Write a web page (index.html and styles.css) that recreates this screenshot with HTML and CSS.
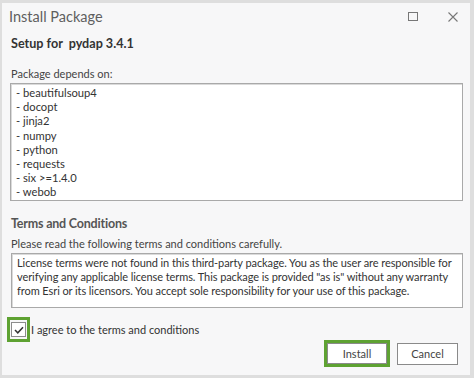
FILE: index.html
```html
<!DOCTYPE html>
<html lang="en">
<head>
    <meta charset="UTF-8">
    <title>Install Package</title>
    <link rel="stylesheet" href="styles.css">
</head>
<body>
    <div class="dialog">
        <div class="titlebar">
            <span class="title">Install Package</span>
            <div class="window-btns">
                <span class="win-btn">
                    <svg width="10" height="9" viewBox="0 0 10 9"><rect x="0.5" y="0.5" width="9" height="8" fill="none" stroke="#777" stroke-width="1"/></svg>
                </span>
                <span class="win-btn">
                    <svg width="10" height="10" viewBox="0 0 10 10"><path d="M0.5 0.5 L9.5 9.5 M9.5 0.5 L0.5 9.5" stroke="#777" stroke-width="1.1" fill="none"/></svg>
                </span>
            </div>
        </div>

        <div class="content">
            <h1 class="setup">Setup for&nbsp; pydap 3.4.1</h1>

            <div class="label">Package depends on:</div>
            <div class="box deps">
                <div>- beautifulsoup4</div>
                <div>- docopt</div>
                <div>- jinja2</div>
                <div>- numpy</div>
                <div>- python</div>
                <div>- requests</div>
                <div>- six &gt;=1.4.0</div>
                <div>- webob</div>
            </div>

            <h2 class="section">Terms and Conditions</h2>
            <div class="label">Please read the following terms and conditions carefully.</div>
            <div class="box terms">License terms were not found in this third-party package. You as the user are responsible for<br>verifying any applicable license terms. This package is provided "as is" without any warranty<br>from Esri or its licensors. You accept sole responsibility for your use of this package.</div>

            <label class="agree">
                <span class="highlight check-hl">
                    <span class="checkbox">
                        <svg width="10" height="8" viewBox="0 0 10 8"><path d="M1 4 L3.8 6.8 L9 1.2" stroke="#333" stroke-width="1.5" fill="none"/></svg>
                    </span>
                </span>
                <span>I agree to the terms and conditions</span>
            </label>

            <div class="actions">
                <span class="highlight btn-hl"><button class="btn">Install</button></span>
                <button class="btn">Cancel</button>
            </div>
        </div>
    </div>
</body>
</html>
```

FILE: styles.css
```css
body {
    margin: 0;
    background: #dedede;
    font-family: 'Lato', 'Segoe UI', sans-serif;
    color: #333;
}

.dialog {
    background: #f7f7f8;
    margin: 3px 4px 0 2px;
    height: 372px;
    box-sizing: border-box;
}

.titlebar {
    display: flex;
    justify-content: space-between;
    align-items: center;
    height: 27px;
    padding: 0 12px 0 7px;
}

.title {
    font-size: 14.5px;
    line-height: 20px;
    color: #5f5f5f;
}

.window-btns {
    display: flex;
    gap: 30px;
    align-items: center;
}

.win-btn {
    display: flex;
}

.content {
    padding: 0 7px 0 8px;
}

.setup {
    font-size: 12.6px;
    line-height: 18px;
    font-weight: 700;
    color: #333;
    margin: 5px 0 0 1px;
}

.label {
    font-size: 11px;
    line-height: 15px;
    color: #444;
    margin: 12.5px 0 2.5px 1px;
}

.section + .label {
    margin-top: 2.5px;
}

.box {
    background: #fff;
    border: 1px solid #a9a9a9;
    box-shadow: inset 1px 1px 0 #dadada;
    font-size: 11.2px;
    line-height: 14.2px;
    color: #333;
    box-sizing: border-box;
}

.deps {
    height: 118px;
    padding: 2px 5px;
}

.section {
    font-size: 12.5px;
    line-height: 18px;
    font-weight: 700;
    letter-spacing: -0.2px;
    color: #555;
    margin: 14px 0 0 1px;
}

.terms {
    height: 55px;
    padding: 2px 5px;
    margin-left: 1px;
    font-size: 11px;
    line-height: 14px;
    letter-spacing: -0.08px;
    white-space: nowrap;
}

.agree {
    display: flex;
    align-items: center;
    gap: 1px;
    font-size: 11px;
    color: #333;
    margin-top: 9px;
    margin-left: -3px;
}

.highlight {
    border: 3px solid #5ea232;
    display: inline-flex;
}

.check-hl {
    padding: 2px 1px;
}

.checkbox {
    width: 13px;
    height: 13px;
    border: 1px solid #8c8c8c;
    background: #fff;
    display: flex;
    align-items: center;
    justify-content: center;
}

.actions {
    display: flex;
    justify-content: flex-end;
    align-items: center;
    gap: 7px;
    margin-top: -2px;
    margin-right: 5px;
}

.btn {
    width: 61px;
    height: 22px;
    background: #fff;
    border: 1px solid #8a8a8a;
    font-family: inherit;
    font-size: 11px;
    color: #444;
    padding: 0;
}

.btn-hl .btn {
    width: 60px;
    height: 21px;
}
```
